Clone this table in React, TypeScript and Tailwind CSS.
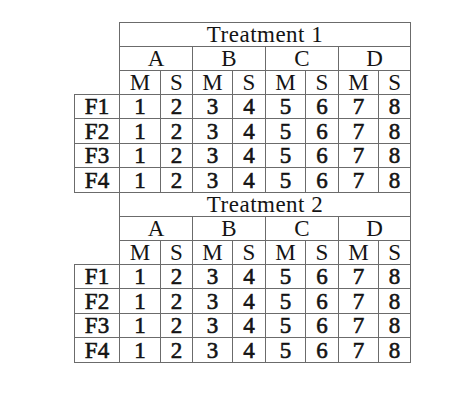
import React from "react";

const colCls = [
  "w-[45px]",
  "w-[41px]",
  "w-[32px]",
  "w-[40px]",
  "w-[33px]",
  "w-[40px]",
  "w-[33px]",
  "w-[40px]",
  "w-[32px]",
];

const cell = "border border-[#6b6b6b] text-center align-middle p-0 leading-none";
const heavy = "[-webkit-text-stroke:0.6px_#141414]";
const empty = "border-0 p-0";

function Block({ n, heights }: { n: number; heights: string[] }) {
  return (
    <>
      <tr className={heights[0]}>
        <td className={empty}></td>
        <td colSpan={8} className={`${cell} tracking-[0.5px]`}>
          Treatment {n}
        </td>
      </tr>
      <tr className={heights[1]}>
        <td className={empty}></td>
        {["A", "B", "C", "D"].map((l) => (
          <td key={l} colSpan={2} className={cell}>
            {l}
          </td>
        ))}
      </tr>
      <tr className={heights[2]}>
        <td className={empty}></td>
        {["M", "S", "M", "S", "M", "S", "M", "S"].map((l, i) => (
          <td key={i} className={cell}>
            {l}
          </td>
        ))}
      </tr>
      {["F1", "F2", "F3", "F4"].map((f, r) => (
        <tr key={f} className={heights[3 + r]}>
          <td className={`${cell} ${heavy}`}>{f}</td>
          {[1, 2, 3, 4, 5, 6, 7, 8].map((v) => (
            <td key={v} className={`${cell} ${heavy}`}>
              {v}
            </td>
          ))}
        </tr>
      ))}
    </>
  );
}

export default function App() {
  return (
    <div className="w-[474px] h-[415px] bg-white overflow-hidden">
      <div className="pt-[22px] pl-[74px]">
        <table
          className="border-collapse table-fixed w-[336px] text-[23px] text-[#141414]"
          style={{ fontFamily: '"Liberation Serif", "Times New Roman", serif' }}
        >
          <colgroup>
            {colCls.map((c, i) => (
              <col key={i} className={c} />
            ))}
          </colgroup>
          <tbody>
            <Block
              n={1}
              heights={["h-[23px]", "h-[24px]", "h-[24px]", "h-[24px]", "h-[25px]", "h-[24px]", "h-[25px]"]}
            />
            <Block
              n={2}
              heights={["h-[24px]", "h-[24px]", "h-[24px]", "h-[24px]", "h-[25px]", "h-[24px]", "h-[25px]"]}
            />
          </tbody>
        </table>
      </div>
    </div>
  );
}
